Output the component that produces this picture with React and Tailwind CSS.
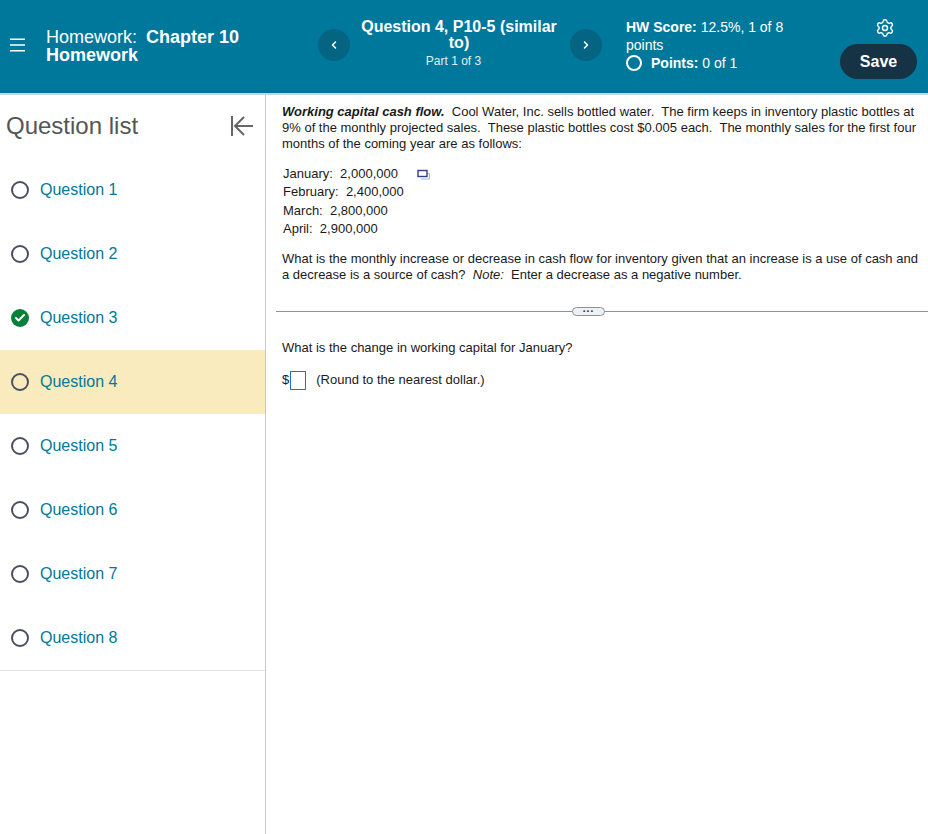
import React from 'react'
import { ChevronLeft, ChevronRight, Settings, Check } from 'lucide-react'

const questions = [
  { label: 'Question 1' },
  { label: 'Question 2' },
  { label: 'Question 3', done: true },
  { label: 'Question 4', active: true },
  { label: 'Question 5' },
  { label: 'Question 6' },
  { label: 'Question 7' },
  { label: 'Question 8' },
]

const months = [
  ['January:', '2,000,000'],
  ['February:', '2,400,000'],
  ['March:', '2,800,000'],
  ['April:', '2,900,000'],
]

const Header = () => (
  <header className="flex h-[93px] items-start bg-[#00789c] text-white">
    <svg className="ml-[10px] mt-[38px] shrink-0" width="15" height="14" viewBox="0 0 15 14" stroke="white" strokeWidth="1.5">
      <path d="M0 1.25h15M0 7h15M0 12.75h15" />
    </svg>
    <div className="ml-[21px] mt-[28px] w-[235px] text-[18px] leading-[18px]">
      Homework:<span className="ml-[9px] font-bold">Chapter 10 Homework</span>
    </div>
    <button className="ml-[37px] mt-[29px] flex h-[32px] w-[32px] shrink-0 items-center justify-center rounded-full bg-[#056482]">
      <ChevronLeft className="h-[12px] w-[12px]" strokeWidth={3} />
    </button>
    <div className="mt-[19px] w-[220px] text-center">
      <div className="px-1 pr-[6px] text-[16px] font-bold leading-[16px]">Question 4, P10-5 (similar to)</div>
      <div className="mt-[2px] pr-[13px] text-[12px] leading-[16px] text-[#e3eff3]">Part 1 of 3</div>
    </div>
    <button className="mt-[29px] flex h-[32px] w-[32px] shrink-0 items-center justify-center rounded-full bg-[#056482]">
      <ChevronRight className="h-[12px] w-[12px]" strokeWidth={3} />
    </button>
    <div className="ml-[24px] mt-[18px] w-[190px] text-[14px] leading-[18px]">
      <div><span className="font-bold">HW Score:</span> 12.5%, 1 of 8 points</div>
      <div className="flex items-center">
        <span className="mr-[9px] h-[16px] w-[16px] rounded-full border-2 border-white" />
        <span><span className="font-bold">Points:</span> 0 of 1</span>
      </div>
    </div>
    <div className="ml-[24px] mt-[18px] flex w-[77px] flex-col items-center">
      <Settings className="ml-[13px] h-[20px] w-[20px]" strokeWidth={1.7} />
      <button className="mt-[6px] h-[35px] w-[77px] rounded-full bg-[#163346] text-[16px] font-bold">Save</button>
    </div>
  </header>
)

const Sidebar = () => (
  <aside className="w-[266px] shrink-0 border-r border-[#c8c8c8]">
    <div className="flex h-[63px] items-center justify-between pb-[2px] pl-[6px] pr-[11px]">
      <h2 className="text-[24px] font-normal text-[#555555]">Question list</h2>
      <svg width="24" height="24" viewBox="0 0 24 24" fill="none" stroke="#666666" strokeWidth="2">
        <path d="M2 2v20M23 12H5M14 3l-9 9 9 9" />
      </svg>
    </div>
    <ul className="border-b border-[#e4e4e4]">
      {questions.map((q) => (
        <li
          key={q.label}
          className={`flex h-[64px] items-center pl-[11px] ${q.active ? 'bg-[#f9ebbd]' : ''}`}
        >
          {q.done ? (
            <span className="flex h-[18px] w-[18px] items-center justify-center rounded-full bg-[#0a7f3a]">
              <Check className="h-[12px] w-[12px] text-white" strokeWidth={4} />
            </span>
          ) : (
            <span className="h-[18px] w-[18px] rounded-full border-2 border-[#48525e]" />
          )}
          <span className="ml-[11px] text-[16px] text-[#00789c]">{q.label}</span>
        </li>
      ))}
    </ul>
  </aside>
)

const Content = () => (
  <main className="min-w-0 flex-1 pt-[9px] text-[13px] leading-[16px] text-[#1a1a1a]">
    <div className="pl-[16px] pr-[8px]">
      <p>
        <b><i>Working capital cash flow.</i></b>&nbsp; Cool Water, Inc. sells bottled water.&nbsp; The firm keeps in
        inventory plastic bottles at 9% of the monthly projected sales.&nbsp; These plastic bottles cost $0.005
        each.&nbsp; The monthly sales for the first four months of the coming year are as follows:
      </p>
      <div className="mt-[13px] flex">
        <div className="pl-px leading-[18.4px]">
          {months.map(([m, v]) => (
            <div key={m}>{m}&nbsp; {v}</div>
          ))}
        </div>
        <svg className="ml-[13px] mt-[4px]" width="13" height="11" viewBox="0 0 13 11" fill="none">
          <path d="M4 4.5h8.5v5.5H4" stroke="#aab4cf" />
          <rect x="1" y="1.5" width="9" height="6" fill="white" stroke="#2f3f8f" strokeWidth="1.4" />
        </svg>
      </div>
      <p className="mt-[12px]">
        What is the monthly increase or decrease in cash flow for inventory given that an increase is a use of cash and
        a decrease is a source of cash?&nbsp; <i>Note:</i>&nbsp; Enter a decrease as a negative number.
      </p>
    </div>
    <div className="relative ml-[10px] mt-[28px] h-px bg-[#8a929c]">
      <span className="absolute left-[296px] top-[-4px] flex h-[9px] w-[33px] items-center justify-center rounded-full border border-[#8a929c] bg-[#eef0f2] pb-[4px] text-[10px] font-bold leading-none tracking-[1px]">
        ...
      </span>
    </div>
    <div className="pl-[16px]">
      <p className="mt-[28px]">What is the change in working capital for January?</p>
      <div className="mt-[15px] flex items-center">
        <span>$</span>
        <span className="ml-px h-[19px] w-[16px] border border-[#2b6cd0] bg-white" />
        <span className="ml-[10px]">(Round to the nearest dollar.)</span>
      </div>
    </div>
  </main>
)

export default function App() {
  return (
    <div className="flex h-[834px] w-[928px] flex-col overflow-hidden bg-white font-['Liberation_Sans',Arial,sans-serif]">
      <Header />
      <div className="h-[2px] bg-[#c9d3dc]" />
      <div className="flex flex-1">
        <Sidebar />
        <Content />
      </div>
    </div>
  )
}
